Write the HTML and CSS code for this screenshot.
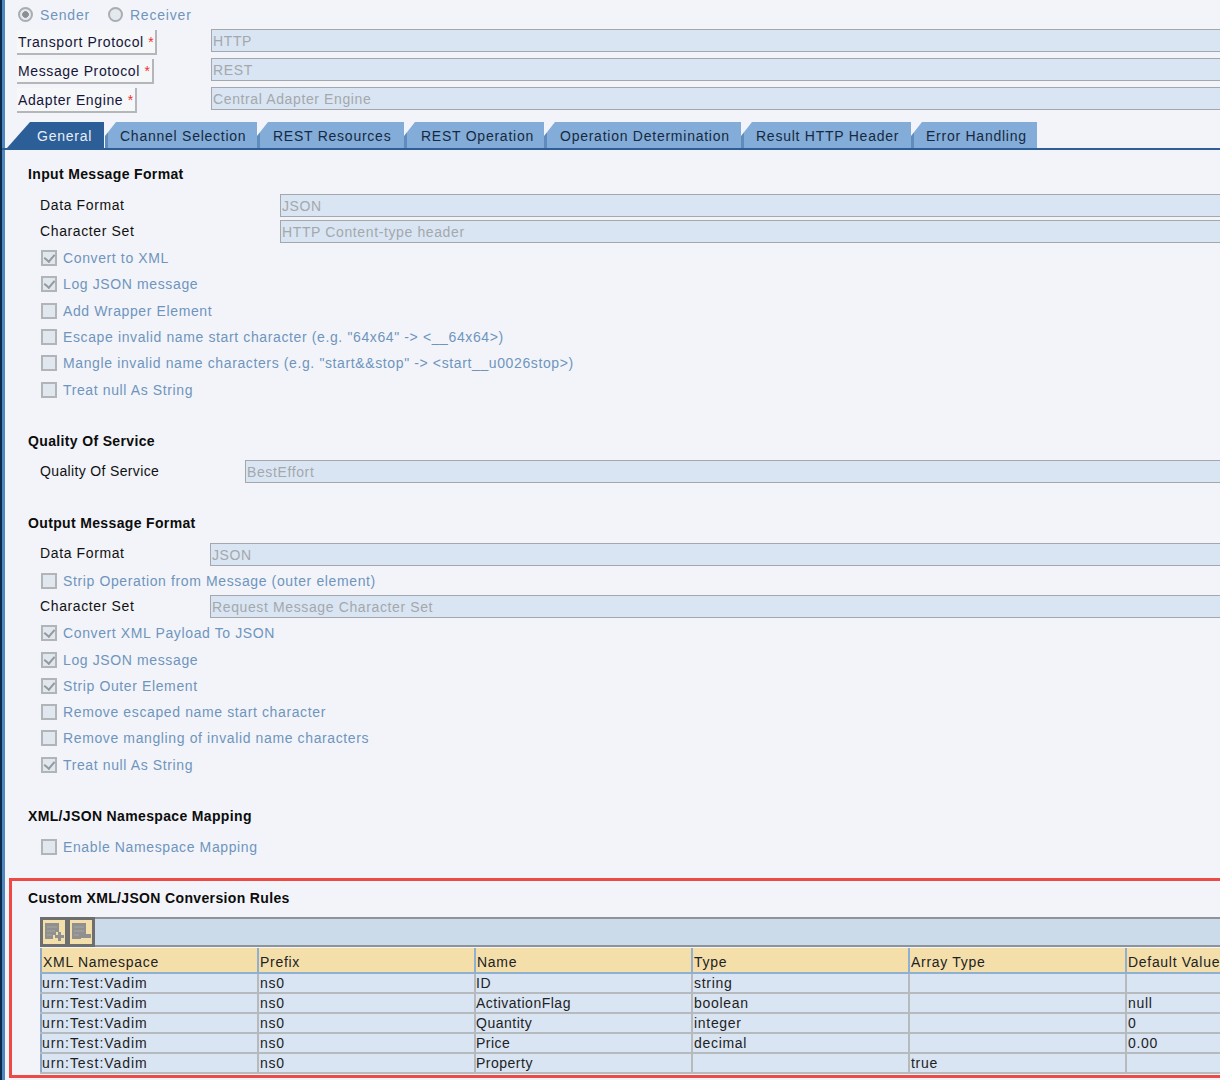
FILE: index.html
```html
<!DOCTYPE html>
<html lang="en">
<head>
<meta charset="utf-8">
<title>Communication Channel</title>
<link rel="stylesheet" href="styles.css">
</head>
<body>
<div class="page">
  <div class="direction">
    <span class="radio checked"></span><span class="opt">Sender</span>
    <span class="radio second"></span><span class="opt">Receiver</span>
  </div>
  <div class="head-row"><span class="req">Transport Protocol <b>*</b></span><span class="input head-input">HTTP</span></div>
  <div class="head-row"><span class="req">Message Protocol <b>*</b></span><span class="input head-input">REST</span></div>
  <div class="head-row"><span class="req">Adapter Engine <b>*</b></span><span class="input head-input">Central Adapter Engine</span></div>

  <div class="tabs">
    <span class="tab active t1">General</span>
    <span class="tab t2">Channel Selection</span>
    <span class="tab t3">REST Resources</span>
    <span class="tab t4">REST Operation</span>
    <span class="tab t5">Operation Determination</span>
    <span class="tab t6">Result HTTP Header</span>
    <span class="tab t7">Error Handling</span>
  </div>

  <section class="sec s-input">
    <h3>Input Message Format</h3>
    <div class="field"><label class="w-input">Data Format</label><span class="input">JSON</span></div>
    <div class="field"><label class="w-input">Character Set</label><span class="input">HTTP Content-type header</span></div>
    <div class="check"><i class="box on"></i>Convert to XML</div>
    <div class="check"><i class="box on"></i>Log JSON message</div>
    <div class="check"><i class="box"></i>Add Wrapper Element</div>
    <div class="check"><i class="box"></i>Escape invalid name start character (e.g. "64x64" -&gt; &lt;__64x64&gt;)</div>
    <div class="check"><i class="box"></i>Mangle invalid name characters (e.g. "start&amp;&amp;stop" -&gt; &lt;start__u0026stop&gt;)</div>
    <div class="check"><i class="box"></i>Treat null As String</div>
  </section>

  <section class="sec s-qos">
    <h3>Quality Of Service</h3>
    <div class="field"><label class="w-qos">Quality Of Service</label><span class="input">BestEffort</span></div>
  </section>

  <section class="sec s-output">
    <h3>Output Message Format</h3>
    <div class="field"><label class="w-out">Data Format</label><span class="input">JSON</span></div>
    <div class="check"><i class="box"></i>Strip Operation from Message (outer element)</div>
    <div class="field"><label class="w-out">Character Set</label><span class="input">Request Message Character Set</span></div>
    <div class="check"><i class="box on"></i>Convert XML Payload To JSON</div>
    <div class="check"><i class="box on"></i>Log JSON message</div>
    <div class="check"><i class="box on"></i>Strip Outer Element</div>
    <div class="check"><i class="box"></i>Remove escaped name start character</div>
    <div class="check"><i class="box"></i>Remove mangling of invalid name characters</div>
    <div class="check"><i class="box on"></i>Treat null As String</div>
  </section>

  <section class="sec s-ns">
    <h3>XML/JSON Namespace Mapping</h3>
    <div class="check"><i class="box"></i>Enable Namespace Mapping</div>
  </section>

  <section class="rules">
    <h3>Custom XML/JSON Conversion Rules</h3>
    <div class="toolbar">
      <span class="tbtn"><svg viewBox="0 0 22 22" width="22" height="22"><path class="ic" d="M2 2h14v9h-3v3h-3v4h-8z"/><path class="ln" d="M4 6h10M4 10h8M4 14h5"/><path class="ic" d="M15 11h3v3h3v3h-3v3h-3v-3h-3v-3h3z"/></svg></span>
      <span class="tbtn"><svg viewBox="0 0 22 22" width="22" height="22"><path class="ic" d="M2 2h14v11h-5v5h-9z"/><path class="ln" d="M4 6h10M4 10h10M4 14h5"/><path class="ic" d="M10 13h11v4h-11z"/></svg></span>
    </div>
    <table>
      <thead><tr><th>XML Namespace</th><th>Prefix</th><th>Name</th><th>Type</th><th>Array Type</th><th>Default Value</th></tr></thead>
      <tbody>
        <tr><td>urn:Test:Vadim</td><td>ns0</td><td>ID</td><td>string</td><td></td><td></td></tr>
        <tr><td>urn:Test:Vadim</td><td>ns0</td><td>ActivationFlag</td><td>boolean</td><td></td><td>null</td></tr>
        <tr><td>urn:Test:Vadim</td><td>ns0</td><td>Quantity</td><td>integer</td><td></td><td>0</td></tr>
        <tr><td>urn:Test:Vadim</td><td>ns0</td><td>Price</td><td>decimal</td><td></td><td>0.00</td></tr>
        <tr><td>urn:Test:Vadim</td><td>ns0</td><td>Property</td><td></td><td>true</td><td></td></tr>
      </tbody>
    </table>
  </section>
</div>
</body>
</html>
```
FILE: styles.css
```css
* { box-sizing: border-box; }
html, body { margin: 0; padding: 0; height: 1080px; overflow: hidden; background: #f2f4f9; }
body { font-family: "Liberation Sans", Arial, sans-serif; font-size: 14px; letter-spacing: 0.62px; color: #111; }
.page { height: 1080px; border-left: 2px solid #0b2a4a; box-shadow: inset 3px 0 0 #4f86c0; overflow: hidden; }

.direction { height: 29px; display: flex; align-items: center; padding-left: 16px; color: #6f94bd; letter-spacing: 0.8px; }
.radio { width: 15px; height: 15px; border-radius: 50%; border: 2px solid #a9adb1; background: #e4e9f0; margin-right: 7px; flex: none; }
.radio.checked { background: radial-gradient(circle, #8a8f94 0 3px, #e4e9f0 3.6px); }
.radio.second { margin-left: 18px; }

.head-row { height: 29px; display: flex; align-items: flex-start; position: relative; padding-left: 15px; }
.req { height: 25px; padding: 4px 1px 0 1px; margin-top: 1px; background: #f6f7f9; border-right: 2px solid #b4b6b8; border-bottom: 2px solid #b4b6b8; white-space: nowrap; color: #15153a; }
.req b { color: #f03030; font-weight: 400; }
.input { flex: 1; height: 23px; border: 1.5px solid #a5a8ab; background: #d9e5f3; color: #a4a8ac; padding-left: 1px; line-height: 22px; white-space: nowrap; }
.head-input { position: absolute; left: 209px; right: -4px; top: 0; }

.tabs { height: 34px; display: flex; padding-left: 5px; align-items: flex-end; border-bottom: 2px solid #2c5f97; color: #152a40; letter-spacing: 0.75px; }
.tab { height: 26px; background: linear-gradient(90deg, #5f8cbc 3px, #84acd9 3px); line-height: 28px; white-space: nowrap; clip-path: polygon(11px 0, 100% 0, 100% 100%, 0 100%, 0 14px); flex: none; }
.tab.active { background: #2c5f97; color: #e8eef6; clip-path: polygon(23px 0, 100% 0, 100% 100%, 0 100%); padding-left: 30px; width: 97px; }
.t2 { width: 152px; margin-left: 1px; padding-left: 15px; }
.t3 { width: 147px; padding-left: 16px; }
.t4 { width: 140px; padding-left: 17px; }
.t5 { width: 197px; padding-left: 16px; }
.t6 { width: 170px; padding-left: 15px; }
.t7 { width: 126px; padding-left: 15px; }

h3 { margin: 0; font-size: 14px; font-weight: 700; letter-spacing: 0.35px; color: #0c0c0c; height: 26px; line-height: 26px; }
.sec { padding: 0 0 0 26px; }
.s-input { padding-top: 11px; }
.s-qos { padding-top: 25px; }
.s-output { padding-top: 26px; }
.s-ns { padding-top: 25px; }
.s-input h3 { margin-bottom: 5px; }
.s-qos h3 { margin-bottom: 4px; }
.s-output h3 { margin-bottom: 4px; }
.s-ns h3 { margin-bottom: 5px; }

.field { height: 26px; display: flex; align-items: center; margin-right: -4px; }
.field label { padding-left: 12px; flex: none; color: #111; }
.w-input { width: 252px; }
.w-qos { width: 217px; letter-spacing: 0.35px; }
.w-out { width: 182px; }
.s-qos .input { margin-top: 2px; }
.s-output h3 + .field .input { margin-top: 3px; }
.check { height: 26.3px; display: flex; align-items: center; padding-left: 13px; color: #6f94bd; white-space: nowrap; }
.field + .check { margin-top: 1px; }
.s-output .field + .check { margin-top: 2px; }
.s-output .check + .field { margin-top: -1px; }
.s-output .field + .check + .field + .check { margin-top: 1px; }
.box { width: 16px; height: 16px; border: 2px solid #b2b5b8; background: #e1e7ef; margin-right: 6px; flex: none; position: relative; }
.box.on::after { content: ""; position: absolute; left: 3px; top: 0; width: 5px; height: 8px; border: solid #95999d; border-width: 0 2.5px 2.5px 0; transform: rotate(40deg); }

.rules { margin: 18px -4px 0 7px; height: 200px; border: 3px solid #ee4a45; padding: 4px 0 0 16px; background: #f2f4f9; }
.rules h3 { height: 26px; margin-bottom: 6px; }
.toolbar { height: 30px; margin-left: 12px; background: #cbdbea; border-top: 2px solid #8e9398; border-bottom: 2px solid #8e9398; display: flex; }
.tbtn { width: 28px; height: 30px; margin-top: -2px; background: #f2dfa9; border: 3px solid #6e6e6e; display: flex; align-items: center; justify-content: center; flex: none; }
.tbtn + .tbtn { margin-left: -1px; }
.ic { fill: #909090; }
.ln { stroke: #a6a6a0; fill: none; stroke-width: 1; }

table { border-collapse: collapse; table-layout: fixed; width: 1240px; margin: 1px 0 0 12px; letter-spacing: 0.7px; }
th { height: 25px; padding: 3px 0 0 1px; text-align: left; font-weight: 400; background: #f4dfab; color: #222; border: 1px solid #8fb0d0; border-width: 0 2px 2px 0; width: 217px; overflow: hidden; white-space: nowrap; }
td { height: 20px; padding: 0 0 0 1px; background: #d9e5f3; color: #222; border: solid #b6babd; border-width: 0 2px 2px 0; line-height: 18px; overflow: hidden; white-space: nowrap; }
td:first-child, th:first-child { border-left: 2px solid #8fa9c4; }
td:first-child { letter-spacing: 0.95px; padding-left: 0; }
td:nth-child(3) { letter-spacing: 0.5px; padding-left: 0; }
```
